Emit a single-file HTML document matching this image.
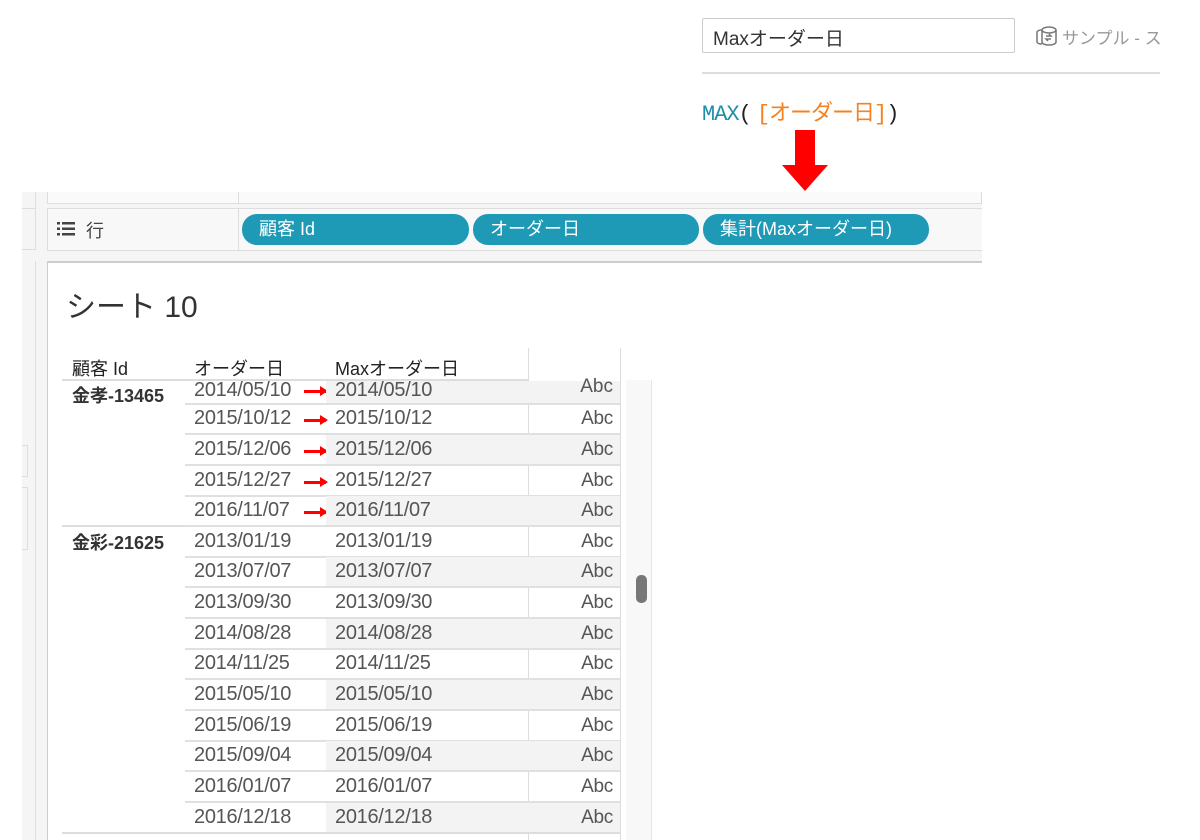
<!DOCTYPE html>
<html><head><meta charset="utf-8">
<style>
*{margin:0;padding:0;box-sizing:border-box}
body{width:1200px;height:840px;position:relative;background:#fff;overflow:hidden;font-family:"Liberation Sans","Noto Sans CJK JP",sans-serif}
.a{position:absolute}
.pill{position:absolute;top:214px;height:31px;border-radius:15px;background:#1f9ab6;color:#fff;font-size:18px;line-height:31px;padding-left:17px}
.r{position:absolute;left:185px;width:435px;height:31px;border-bottom:2px solid #e0e0e0;font-size:20px;color:#555;letter-spacing:-0.3px}
.r .d1{position:absolute;left:9px;top:3px}
.r .d2{position:absolute;left:141px;top:0;width:202px;height:29px;padding:3px 0 0 9px}
.r .ab{position:absolute;left:343px;top:0;width:92px;height:29px;text-align:right;padding:4px 7px 0 0;font-size:19px}
.s .d2,.s .ab{background:#f3f3f3}
.arr{position:absolute;left:119px;top:15px;width:22px;height:3px;background:#f00}
.arr:after{content:"";position:absolute;right:-2px;top:-4px;border-left:8px solid #f00;border-top:5px solid transparent;border-bottom:5px solid transparent}
.nm{position:absolute;left:72px;font-size:18px;color:#333;font-weight:bold}
</style></head><body>
<div class="a" style="left:702px;top:18px;width:313px;height:35px;border:1px solid #ccc;border-radius:2px;font-size:19px;color:#333;padding:5px 0 0 10px">Maxオーダー日</div>
<svg class="a" style="left:1035px;top:24px" width="24" height="24" viewBox="0 0 24 24" fill="none" stroke="#777" stroke-width="1.5"><ellipse cx="14" cy="6" rx="7" ry="3"/><path d="M7 6v12c0 1.7 3 3 7 3s7-1.3 7-3V6"/><path d="M7 6c-3 0-5 1-5 2.5v9C2 19 4 20 7 20"/><path d="M11 12h5l-2-2M16 15h-5l2 2"/></svg>
<div class="a" style="left:1062px;top:24px;font-size:17px;color:#999;white-space:nowrap">サンプル - ス</div>
<div class="a" style="left:702px;top:72px;width:458px;height:2px;background:#ddd"></div>
<div class="a" style="left:702px;top:95px;font-family:'Liberation Mono','Noto Sans CJK JP',monospace;font-size:22px;color:#222;white-space:nowrap;letter-spacing:-1px"><span style="color:#1f8fa8">MAX</span>(<span style="color:#f58220;margin-left:6px">[オーダー日]</span>)</div>
<div class="a" style="left:795px;top:130px;width:20px;height:36px;background:#f00"></div>
<div class="a" style="left:782px;top:165px;width:0;height:0;border-left:23px solid transparent;border-right:23px solid transparent;border-top:26px solid #f00"></div>
<div class="a" style="left:22px;top:192px;width:960px;height:648px;background:#f5f5f5"></div>
<div class="a" style="left:22px;top:192px;width:14px;height:20px;border-right:1px solid #ddd"></div>
<div class="a" style="left:47px;top:192px;width:935px;height:12px;background:#fafafa;border:1px solid #ddd;border-top:none"></div>
<div class="a" style="left:238px;top:192px;width:1px;height:12px;background:#ddd"></div>
<div class="a" style="left:22px;top:208px;width:14px;height:42px;border:1px solid #ddd;border-left:none"></div>
<div class="a" style="left:47px;top:208px;width:935px;height:43px;background:#f8f8f8;border:1px solid #ddd;border-right:none"></div>
<div class="a" style="left:238px;top:208px;width:1px;height:43px;background:#ddd"></div>
<svg class="a" style="left:57px;top:222px" width="18" height="14"><g fill="#444"><rect x="0" y="0" width="3" height="2.5"/><rect x="5" y="0" width="13" height="2.5"/><rect x="0" y="5.5" width="3" height="2.5"/><rect x="5" y="5.5" width="13" height="2.5"/><rect x="0" y="11" width="3" height="2.5"/><rect x="5" y="11" width="13" height="2.5"/></g></svg>
<div class="a" style="left:86px;top:217px;font-size:18px;color:#444">行</div>
<div class="pill" style="left:242px;width:227px">顧客 Id</div>
<div class="pill" style="left:473px;width:226px">オーダー日</div>
<div class="pill" style="left:703px;width:226px">集計(Maxオーダー日)</div>
<div class="a" style="left:22px;top:261px;width:14px;height:579px;border-right:1px solid #ddd"></div>
<div class="a" style="left:22px;top:445px;width:6px;height:32px;border:1px solid #ddd;border-left:none"></div>
<div class="a" style="left:22px;top:487px;width:6px;height:63px;border:1px solid #ddd;border-left:none"></div>
<div class="a" style="left:47px;top:261px;width:935px;height:579px;background:#fff;border-left:1px solid #ccc;border-top:2px solid #ccc"></div>
<div class="a" style="left:66px;top:282px;font-size:30px;color:#333">シート 10</div>
<div class="a" style="left:72px;top:355px;font-size:18px;color:#222">顧客 Id</div>
<div class="a" style="left:194px;top:355px;font-size:18px;color:#222">オーダー日</div>
<div class="a" style="left:335px;top:355px;font-size:18px;color:#222">Maxオーダー日</div>
<div class="a" style="left:62px;top:379px;width:466px;height:2px;background:#ddd"></div>
<div class="a" style="left:528px;top:348px;width:1px;height:492px;background:#ddd"></div>
<div class="a" style="left:620px;top:348px;width:1px;height:492px;background:#ddd"></div>
<div class="a" style="left:626px;top:380px;width:26px;height:460px;background:#f8f8f8;border-right:1px solid #e6e6e6"></div>
<div class="a" style="left:636px;top:575px;width:11px;height:28px;border-radius:5px;background:#777"></div>
<div class="a" style="left:528px;top:381px;width:92px;height:22px;background:#f3f3f3"></div>
<div class="r s" style="top:381px;height:24px"><span class="d1" style="top:-2px">2014/05/10</span><i class="arr" style="top:9px"></i><span class="d2" style="height:22px;padding-top:0"><span style="position:relative;top:-2px">2014/05/10</span></span></div>
<div class="a" style="left:570px;top:376px;font-size:19px;color:#555;width:43px;text-align:right">Abc</div>
<div class="r" style="top:404px"><span class="d1">2015/10/12</span><i class="arr"></i><span class="d2">2015/10/12</span><span class="ab">Abc</span></div>
<div class="r s" style="top:435px"><span class="d1">2015/12/06</span><i class="arr"></i><span class="d2">2015/12/06</span><span class="ab">Abc</span></div>
<div class="r" style="top:466px"><span class="d1">2015/12/27</span><i class="arr"></i><span class="d2">2015/12/27</span><span class="ab">Abc</span></div>
<div class="r s" style="top:496px"><span class="d1">2016/11/07</span><i class="arr"></i><span class="d2">2016/11/07</span><span class="ab">Abc</span></div>
<div class="a" style="left:62px;top:525px;width:123px;height:2px;background:#ddd"></div>
<div class="r" style="top:527px"><span class="d1">2013/01/19</span><span class="d2">2013/01/19</span><span class="ab">Abc</span></div>
<div class="r s" style="top:557px"><span class="d1">2013/07/07</span><span class="d2">2013/07/07</span><span class="ab">Abc</span></div>
<div class="r" style="top:588px"><span class="d1">2013/09/30</span><span class="d2">2013/09/30</span><span class="ab">Abc</span></div>
<div class="r s" style="top:619px"><span class="d1">2014/08/28</span><span class="d2">2014/08/28</span><span class="ab">Abc</span></div>
<div class="r" style="top:649px"><span class="d1">2014/11/25</span><span class="d2">2014/11/25</span><span class="ab">Abc</span></div>
<div class="r s" style="top:680px"><span class="d1">2015/05/10</span><span class="d2">2015/05/10</span><span class="ab">Abc</span></div>
<div class="r" style="top:711px"><span class="d1">2015/06/19</span><span class="d2">2015/06/19</span><span class="ab">Abc</span></div>
<div class="r s" style="top:741px"><span class="d1">2015/09/04</span><span class="d2">2015/09/04</span><span class="ab">Abc</span></div>
<div class="r" style="top:772px"><span class="d1">2016/01/07</span><span class="d2">2016/01/07</span><span class="ab">Abc</span></div>
<div class="r s" style="top:803px"><span class="d1">2016/12/18</span><span class="d2">2016/12/18</span><span class="ab">Abc</span></div>
<div class="a" style="left:62px;top:832px;width:558px;height:2px;background:#ddd"></div>
<div class="nm" style="top:382px">金孝-13465</div>
<div class="nm" style="top:529px">金彩-21625</div>
</body></html>
